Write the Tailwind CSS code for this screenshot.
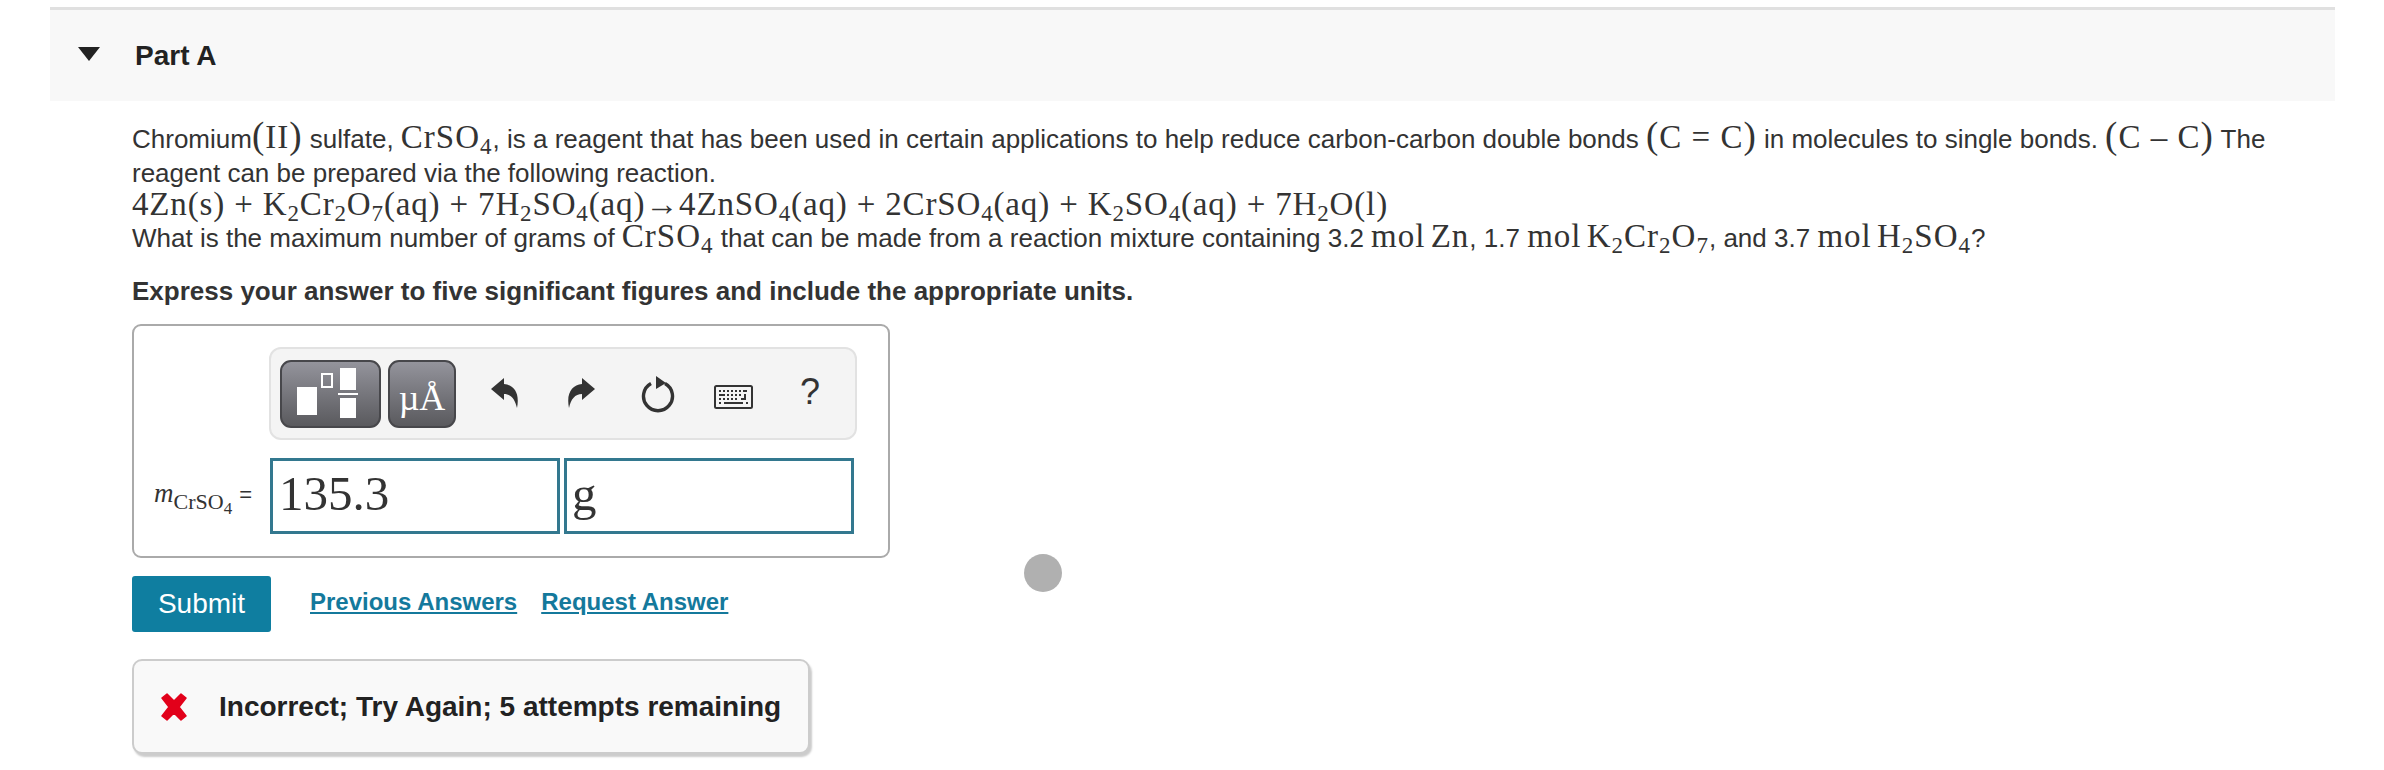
<!DOCTYPE html>
<html lang="en">
<head>
  <meta charset="UTF-8" />
  <title>Part A</title>
  <script src="https://cdn.jsdelivr.net/npm/@tailwindcss/browser@4"></script>
</head>
<body class="bg-white h-[770px] overflow-hidden font-['Liberation_Sans',sans-serif] text-[#333] relative">

  <!-- part header -->
  <div class="ml-[50px] mr-[49px] mt-[7px] h-[94px] border-t-[3px] border-[#e0e0e0] bg-[#f8f8f8] flex items-center">
    <svg class="ml-[28px] w-[22px] h-[14px] -mt-[3px]" viewBox="0 0 22 14"><path d="M0 0h22L11 14z" fill="#222"/></svg>
    <h2 class="ml-[35px] text-[28px] font-bold text-[#222]">Part A</h2>
  </div>

  <div class="ml-[132px] mr-[60px] mt-[21px]">
    <!-- question text -->
    <div class="text-[26px] leading-[34px] whitespace-nowrap [&_sub]:text-[23px]">
      <p class="h-[34px]">Chromium<span class="font-['Liberation_Serif',serif] text-[33px] leading-[0] tracking-[1px]"><span class="text-[37px] leading-[0] font-light">(</span>II<span class="text-[37px] leading-[0] font-light">)</span></span> sulfate, <span class="font-['Liberation_Serif',serif] text-[33px] leading-[0] tracking-[1px]">CrSO<sub>4</sub></span>, is a reagent that has been used in certain applications to help reduce carbon-carbon double bonds <span class="font-['Liberation_Serif',serif] text-[33px] leading-[0] tracking-[1px]"><span class="text-[37px] leading-[0]">(</span>C = C<span class="text-[37px] leading-[0]">)</span></span> in molecules to single bonds. <span class="font-['Liberation_Serif',serif] text-[33px] leading-[0] tracking-[1px]"><span class="text-[37px] leading-[0]">(</span>C – C<span class="text-[37px] leading-[0]">)</span></span> The</p>
      <p class="h-[31px]">reagent can be prepared via the following reaction.</p>
      <p class="h-[34px] font-['Liberation_Serif',serif] text-[33px] leading-[34px] tracking-[0.85px]">4Zn(s) + K<sub>2</sub>Cr<sub>2</sub>O<sub>7</sub>(aq) + 7H<sub>2</sub>SO<sub>4</sub>(aq)→4ZnSO<sub>4</sub>(aq) + 2CrSO<sub>4</sub>(aq) + K<sub>2</sub>SO<sub>4</sub>(aq) + 7H<sub>2</sub>O(l)</p>
      <p class="h-[34px]">What is the maximum number of grams of <span class="font-['Liberation_Serif',serif] text-[33px] leading-[0] tracking-[1px]">CrSO<sub>4</sub></span> that can be made from a reaction mixture containing 3.2 <span class="font-['Liberation_Serif',serif] text-[33px] leading-[0] tracking-[1px] [word-spacing:-4px]">mol Zn</span>, 1.7 <span class="font-['Liberation_Serif',serif] text-[33px] leading-[0] tracking-[1px] [word-spacing:-4px]">mol K<sub>2</sub>Cr<sub>2</sub>O<sub>7</sub></span>, and 3.7 <span class="font-['Liberation_Serif',serif] text-[33px] leading-[0] tracking-[1px] [word-spacing:-4px]">mol H<sub>2</sub>SO<sub>4</sub></span>?</p>
    </div>

    <p class="mt-[19px] text-[26px] leading-[34px] font-bold">Express your answer to five significant figures and include the appropriate units.</p>

    <!-- answer box -->
    <div class="mt-[16px] w-[758px] h-[234px] border-2 border-[#aaa] rounded-[9px] relative flex flex-col">
      <div class="ml-[135px] mt-[21px] w-[588px] h-[93px] bg-[#f4f4f4] border-2 border-[#e2e2e2] rounded-[12px] flex items-center pl-[9px]">
        <button class="w-[101px] h-[68px] rounded-[11px] border-2 border-[#47474b] bg-gradient-to-b from-[#94949c] to-[#5a5a5e] relative">
          <span class="absolute left-[15px] top-[25px] w-[20px] h-[28px] bg-white"></span>
          <span class="absolute left-[39px] top-[11px] w-[12px] h-[15px] border-2 border-white"></span>
          <span class="absolute left-[58px] top-[6px] w-[16px] h-[22px] bg-white"></span>
          <span class="absolute left-[56px] top-[31px] w-[20px] h-[2px] bg-white"></span>
          <span class="absolute left-[58px] top-[36px] w-[16px] h-[20px] bg-white"></span>
        </button>
        <button class="ml-[7px] w-[68px] h-[68px] rounded-[11px] border-2 border-[#47474b] bg-gradient-to-b from-[#94949c] to-[#5a5a5e] text-white font-['Liberation_Serif',serif] text-[36px] leading-none pt-[9px]">µÅ</button>
        <svg class="ml-[35px] w-[28px] h-[32px] -mt-[1px]" viewBox="0 0 28 32"><path d="M0 12 L13 1 V7 C23 8 29 16 26 31 C24 22 20 17 13 17 V23 Z" fill="#333"/></svg>
        <svg class="ml-[48px] w-[28px] h-[32px] -mt-[1px]" viewBox="0 0 28 32"><path d="M28 12 L15 1 V7 C5 8 -1 16 2 31 C4 22 8 17 15 17 V23 Z" fill="#333"/></svg>
        <svg class="ml-[46px] w-[34px] h-[38px]" viewBox="0 0 34 38"><path d="M10 8.5 A14.5 14.5 0 1 0 24 8.5" fill="none" stroke="#333" stroke-width="3.4"/><path d="M15 1 L25 8 L15 14 Z" fill="#333"/></svg>
        <svg class="ml-[39px] w-[39px] h-[24px] mt-[7px]" viewBox="0 0 39 24">
          <rect x="1" y="1" width="37" height="22" rx="1.5" fill="#f4f4f4" stroke="#333" stroke-width="2"/>
          <path d="M5 6h2M9 6h2M13 6h2M17 6h2M21 6h2M25 6h2M29 6h4M5 10h6M13 10h2M17 10h2M21 10h2M25 10h2M31 9v5h-4M5 14h2M9 14h2M13 14h2M17 14h2M21 14h2M5 18h2M10 18h19M32 18h2" stroke="#333" stroke-width="2" fill="none"/>
        </svg>
        <span class="ml-[47px] text-[36px] leading-none text-[#333] -mt-[3px] font-['Liberation_Sans',sans-serif]">?</span>
      </div>
      <div class="mt-[18px] flex items-center">
        <div class="w-[135px] flex justify-end pr-[17px] items-baseline font-['Liberation_Serif',serif] -mt-[5px]">
          <i class="text-[27px]">m</i><span class="text-[22px] relative top-[7px]">CrSO<sub class="text-[17px]">4</sub></span><span class="ml-[7px] font-['Liberation_Sans',sans-serif] text-[22px] -mt-[2px]">=</span>
        </div>
        <div class="ml-[1px] w-[290px] h-[76px] border-[3px] border-[#33788f] font-['Liberation_Serif',serif] text-[49px] leading-[60px] pl-[6px] pt-[3px]">135.3</div>
        <div class="ml-[4px] w-[290px] h-[76px] border-[3px] border-[#33788f] font-['Liberation_Serif',serif] text-[49px] leading-[60px] pl-[5px] pt-[3px]">g</div>
      </div>
    </div>

    <!-- actions -->
    <div class="mt-[18px] flex items-start">
      <button class="w-[139px] h-[56px] bg-[#0f7ea0] text-white text-[28px] rounded-[3px]">Submit</button>
      <a class="ml-[39px] mt-[8px] text-[24px] font-bold text-[#14799c] underline">Previous Answers</a>
      <a class="ml-[24px] mt-[8px] text-[24px] font-bold text-[#14799c] underline">Request Answer</a>
    </div>

    <!-- feedback -->
    <div class="mt-[27px] w-[678px] h-[95px] bg-[#f9f9f9] border-2 border-[#ccc] rounded-[10px] shadow-[2px_3px_2px_#ccc] flex items-center">
      <svg class="ml-[25px] w-[30px] h-[28px]" viewBox="0 0 30 28"><path d="M3 5 L8 1 L15 8 L22 1 L27 5 L20 14 L27 23 L22 27 L15 20 L8 27 L3 23 L10 14 Z" fill="#e2001a" stroke="#e2001a" stroke-linejoin="round" stroke-width="1.5"/></svg>
      <span class="ml-[30px] text-[28px] font-bold text-[#222]">Incorrect; Try Again; 5 attempts remaining</span>
    </div>
  </div>

  <!-- cursor marker -->
  <div class="absolute left-[1024px] top-[554px] w-[38px] h-[38px] rounded-full bg-[#b0b0b0]"></div>
</body>
</html>
